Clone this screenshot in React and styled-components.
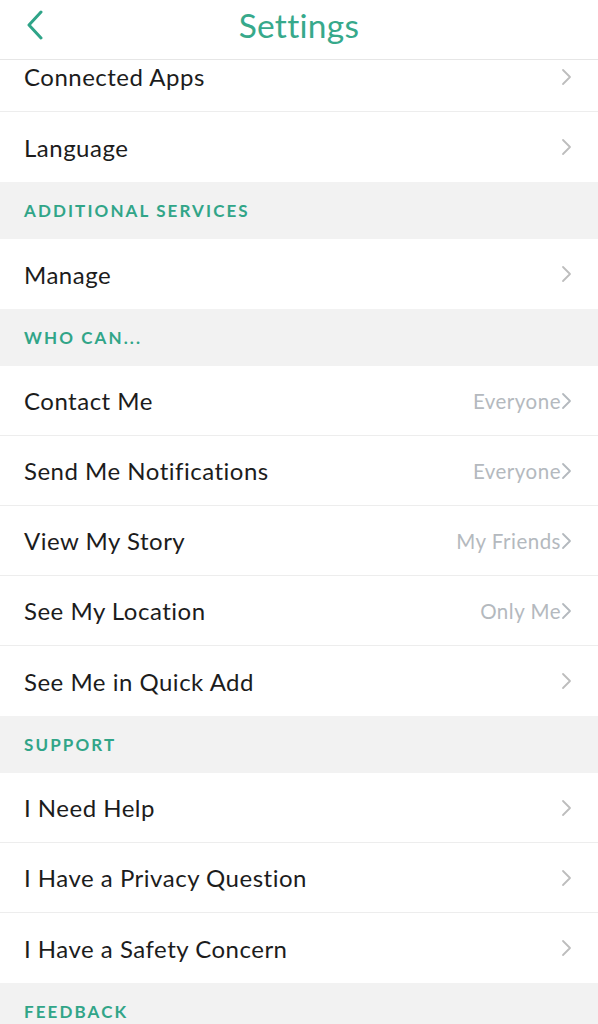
import React from "react";
import styled, { createGlobalStyle } from "styled-components";

const GlobalStyle = createGlobalStyle`
  html, body {
    margin: 0;
    padding: 0;
    background: #fff;
  }
  body {
    font-family: Lato, "Noto Sans", sans-serif;
    -webkit-font-smoothing: antialiased;
  }
`;

const sections = [
  {
    rows: [{ label: "Connected Apps" }, { label: "Language" }],
  },
  {
    title: "ADDITIONAL SERVICES",
    rows: [{ label: "Manage" }],
  },
  {
    title: "WHO CAN...",
    rows: [
      { label: "Contact Me", value: "Everyone" },
      { label: "Send Me Notifications", value: "Everyone" },
      { label: "View My Story", value: "My Friends" },
      { label: "See My Location", value: "Only Me" },
      { label: "See Me in Quick Add" },
    ],
  },
  {
    title: "SUPPORT",
    rows: [
      { label: "I Need Help" },
      { label: "I Have a Privacy Question" },
      { label: "I Have a Safety Concern" },
    ],
  },
  {
    title: "FEEDBACK",
    rows: [],
  },
];

const Screen = styled.div`
  width: 598px;
  height: 1024px;
  overflow: hidden;
  display: flex;
  flex-direction: column;
  background: #fff;
`;

const Header = styled.header`
  position: relative;
  z-index: 2;
  flex: 0 0 60px;
  box-sizing: border-box;
  padding-bottom: 9px;
  display: grid;
  grid-template-columns: 60px 1fr 60px;
  align-items: center;
  background: #fff;
  border-bottom: 1px solid #e6e6e6;
`;

const BackButton = styled.button`
  border: 0;
  background: none;
  padding: 0 0 0 25px;
  display: flex;
  align-items: center;
  cursor: pointer;
`;

const Title = styled.h1`
  margin: 0;
  text-align: center;
  font-size: 33.5px;
  line-height: 40px;
  font-weight: 400;
  color: #37a98b;
  letter-spacing: 0.3px;
`;

const Scroller = styled.div`
  flex: 1;
  overflow: hidden;
`;

const List = styled.div`
  margin-top: -18px;
`;

const SectionTitle = styled.div`
  height: 57px;
  box-sizing: border-box;
  display: flex;
  align-items: center;
  padding-left: 24px;
  background: #f2f2f2;
  color: #31a588;
  font-size: 17px;
  font-weight: 700;
  letter-spacing: 2.1px;
`;

const Row = styled.div`
  height: 70px;
  box-sizing: border-box;
  display: flex;
  align-items: center;
  padding: 0 26px 0 24px;
  background: #fff;
  border-bottom: ${(p) => (p.$last ? "none" : "1px solid #ededed")};
`;

const Label = styled.span`
  flex: 1;
  font-size: 24px;
  color: #1c1c1c;
  letter-spacing: 0.5px;
`;

const Value = styled.span`
  font-size: 20.5px;
  color: #b4b9be;
  letter-spacing: 0.5px;
`;

const Chevron = ({ color = "#bdbdbd" }) => (
  <svg width="11" height="18" viewBox="0 0 11 18">
    <path d="M2 2 L9 9 L2 16" fill="none" stroke={color} strokeWidth="1.8" strokeLinecap="round" strokeLinejoin="round" />
  </svg>
);

const BackIcon = () => (
  <svg width="20" height="30" viewBox="0 0 20 30">
    <path d="M16 2 L4 15 L16 28" fill="none" stroke="#2fa488" strokeWidth="3" strokeLinecap="round" strokeLinejoin="round" />
  </svg>
);

export default function App() {
  return (
    <Screen>
      <GlobalStyle />
      <Header>
        <BackButton aria-label="Back">
          <BackIcon />
        </BackButton>
        <Title>Settings</Title>
        <span />
      </Header>
      <Scroller>
        <List>
          {sections.map((s, si) => (
            <React.Fragment key={si}>
              {s.title && <SectionTitle>{s.title}</SectionTitle>}
              {s.rows.map((r, ri) => (
                <Row key={r.label} $last={ri === s.rows.length - 1}>
                  <Label>{r.label}</Label>
                  {r.value && <Value>{r.value}</Value>}
                  <Chevron color={r.value ? "#b4b9be" : "#bdbdbd"} />
                </Row>
              ))}
            </React.Fragment>
          ))}
        </List>
      </Scroller>
    </Screen>
  );
}
